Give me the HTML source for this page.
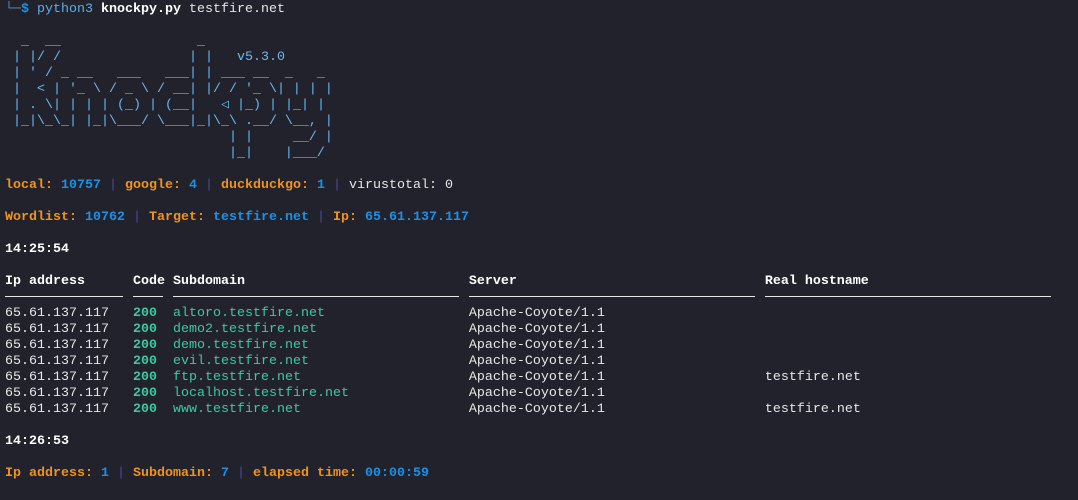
<!DOCTYPE html>
<html><head><meta charset="utf-8"><style>
html,body{margin:0;padding:0;background:#22222d;width:1078px;height:500px;overflow:hidden}
pre{margin:0;padding:2px 0 0 5px;font-family:"Liberation Mono","DejaVu Sans Mono",monospace;font-size:13.33px;line-height:16px;color:#e6e6e6;white-space:pre}
.b{font-weight:bold}
.o{color:#f0921c;font-weight:bold}
.u{color:#1d90e6;font-weight:bold}
.s{color:#4a4a9a}
.g{color:#3ccaa0;font-weight:bold}
.gn{color:#3ccaa0}
.a{color:#6ab8f0}
.p{color:#5aaee8}
.w{color:#ffffff;font-weight:bold}
.ln{display:inline-block;height:6px;border-bottom:1px solid #e6e6e6;vertical-align:top}
</style></head><body><pre><span style="color:#6a8ab0">└─</span><span class="u">$</span> <span class="p">python3</span> <span class="w">knockpy.py</span> testfire.net

<span class="a">  _  __                 _
 | |/ /                | |   v5.3.0
 | ' / _ __   ___   ___| | ___ __  _   _
 |  &lt; | '_ \ / _ \ / __| |/ / '_ \| | | |
 | . \| | | | (_) | (__|   ◁ |_) | |_| |
 |_|\_\_| |_|\___/ \___|_|\_\ .__/ \__, |
                            | |     __/ |
                            |_|    |___/</span>

<span class="o">local:</span> <span class="u">10757</span> <span class="s">|</span> <span class="o">google:</span> <span class="u">4</span> <span class="s">|</span> <span class="o">duckduckgo:</span> <span class="u">1</span> <span class="s">|</span> virustotal: 0

<span class="o">Wordlist:</span> <span class="u">10762</span> <span class="s">|</span> <span class="o">Target:</span> <span class="u">testfire.net</span> <span class="s">|</span> <span class="o">Ip:</span> <span class="u">65.61.137.117</span>

<span class="w">14:25:54</span>

<span class="w">Ip address      Code Subdomain                            Server                               Real hostname</span>
<span class="ln" style="width:118px"></span><span style="display:inline-block;width:10px"></span><span class="ln" style="width:30px"></span><span style="display:inline-block;width:10px"></span><span class="ln" style="width:286px"></span><span style="display:inline-block;width:10px"></span><span class="ln" style="width:286px"></span><span style="display:inline-block;width:10px"></span><span class="ln" style="width:286px"></span>
65.61.137.117   <span class="g">200</span>  <span class="gn">altoro.testfire.net</span>                  Apache-Coyote/1.1
65.61.137.117   <span class="g">200</span>  <span class="gn">demo2.testfire.net</span>                   Apache-Coyote/1.1
65.61.137.117   <span class="g">200</span>  <span class="gn">demo.testfire.net</span>                    Apache-Coyote/1.1
65.61.137.117   <span class="g">200</span>  <span class="gn">evil.testfire.net</span>                    Apache-Coyote/1.1
65.61.137.117   <span class="g">200</span>  <span class="gn">ftp.testfire.net</span>                     Apache-Coyote/1.1                    testfire.net
65.61.137.117   <span class="g">200</span>  <span class="gn">localhost.testfire.net</span>               Apache-Coyote/1.1
65.61.137.117   <span class="g">200</span>  <span class="gn">www.testfire.net</span>                     Apache-Coyote/1.1                    testfire.net

<span class="w">14:26:53</span>

<span class="o">Ip address:</span> <span class="u">1</span> <span class="s">|</span> <span class="o">Subdomain:</span> <span class="u">7</span> <span class="s">|</span> <span class="o">elapsed time:</span> <span class="u">00:00:59</span></pre></body></html>
